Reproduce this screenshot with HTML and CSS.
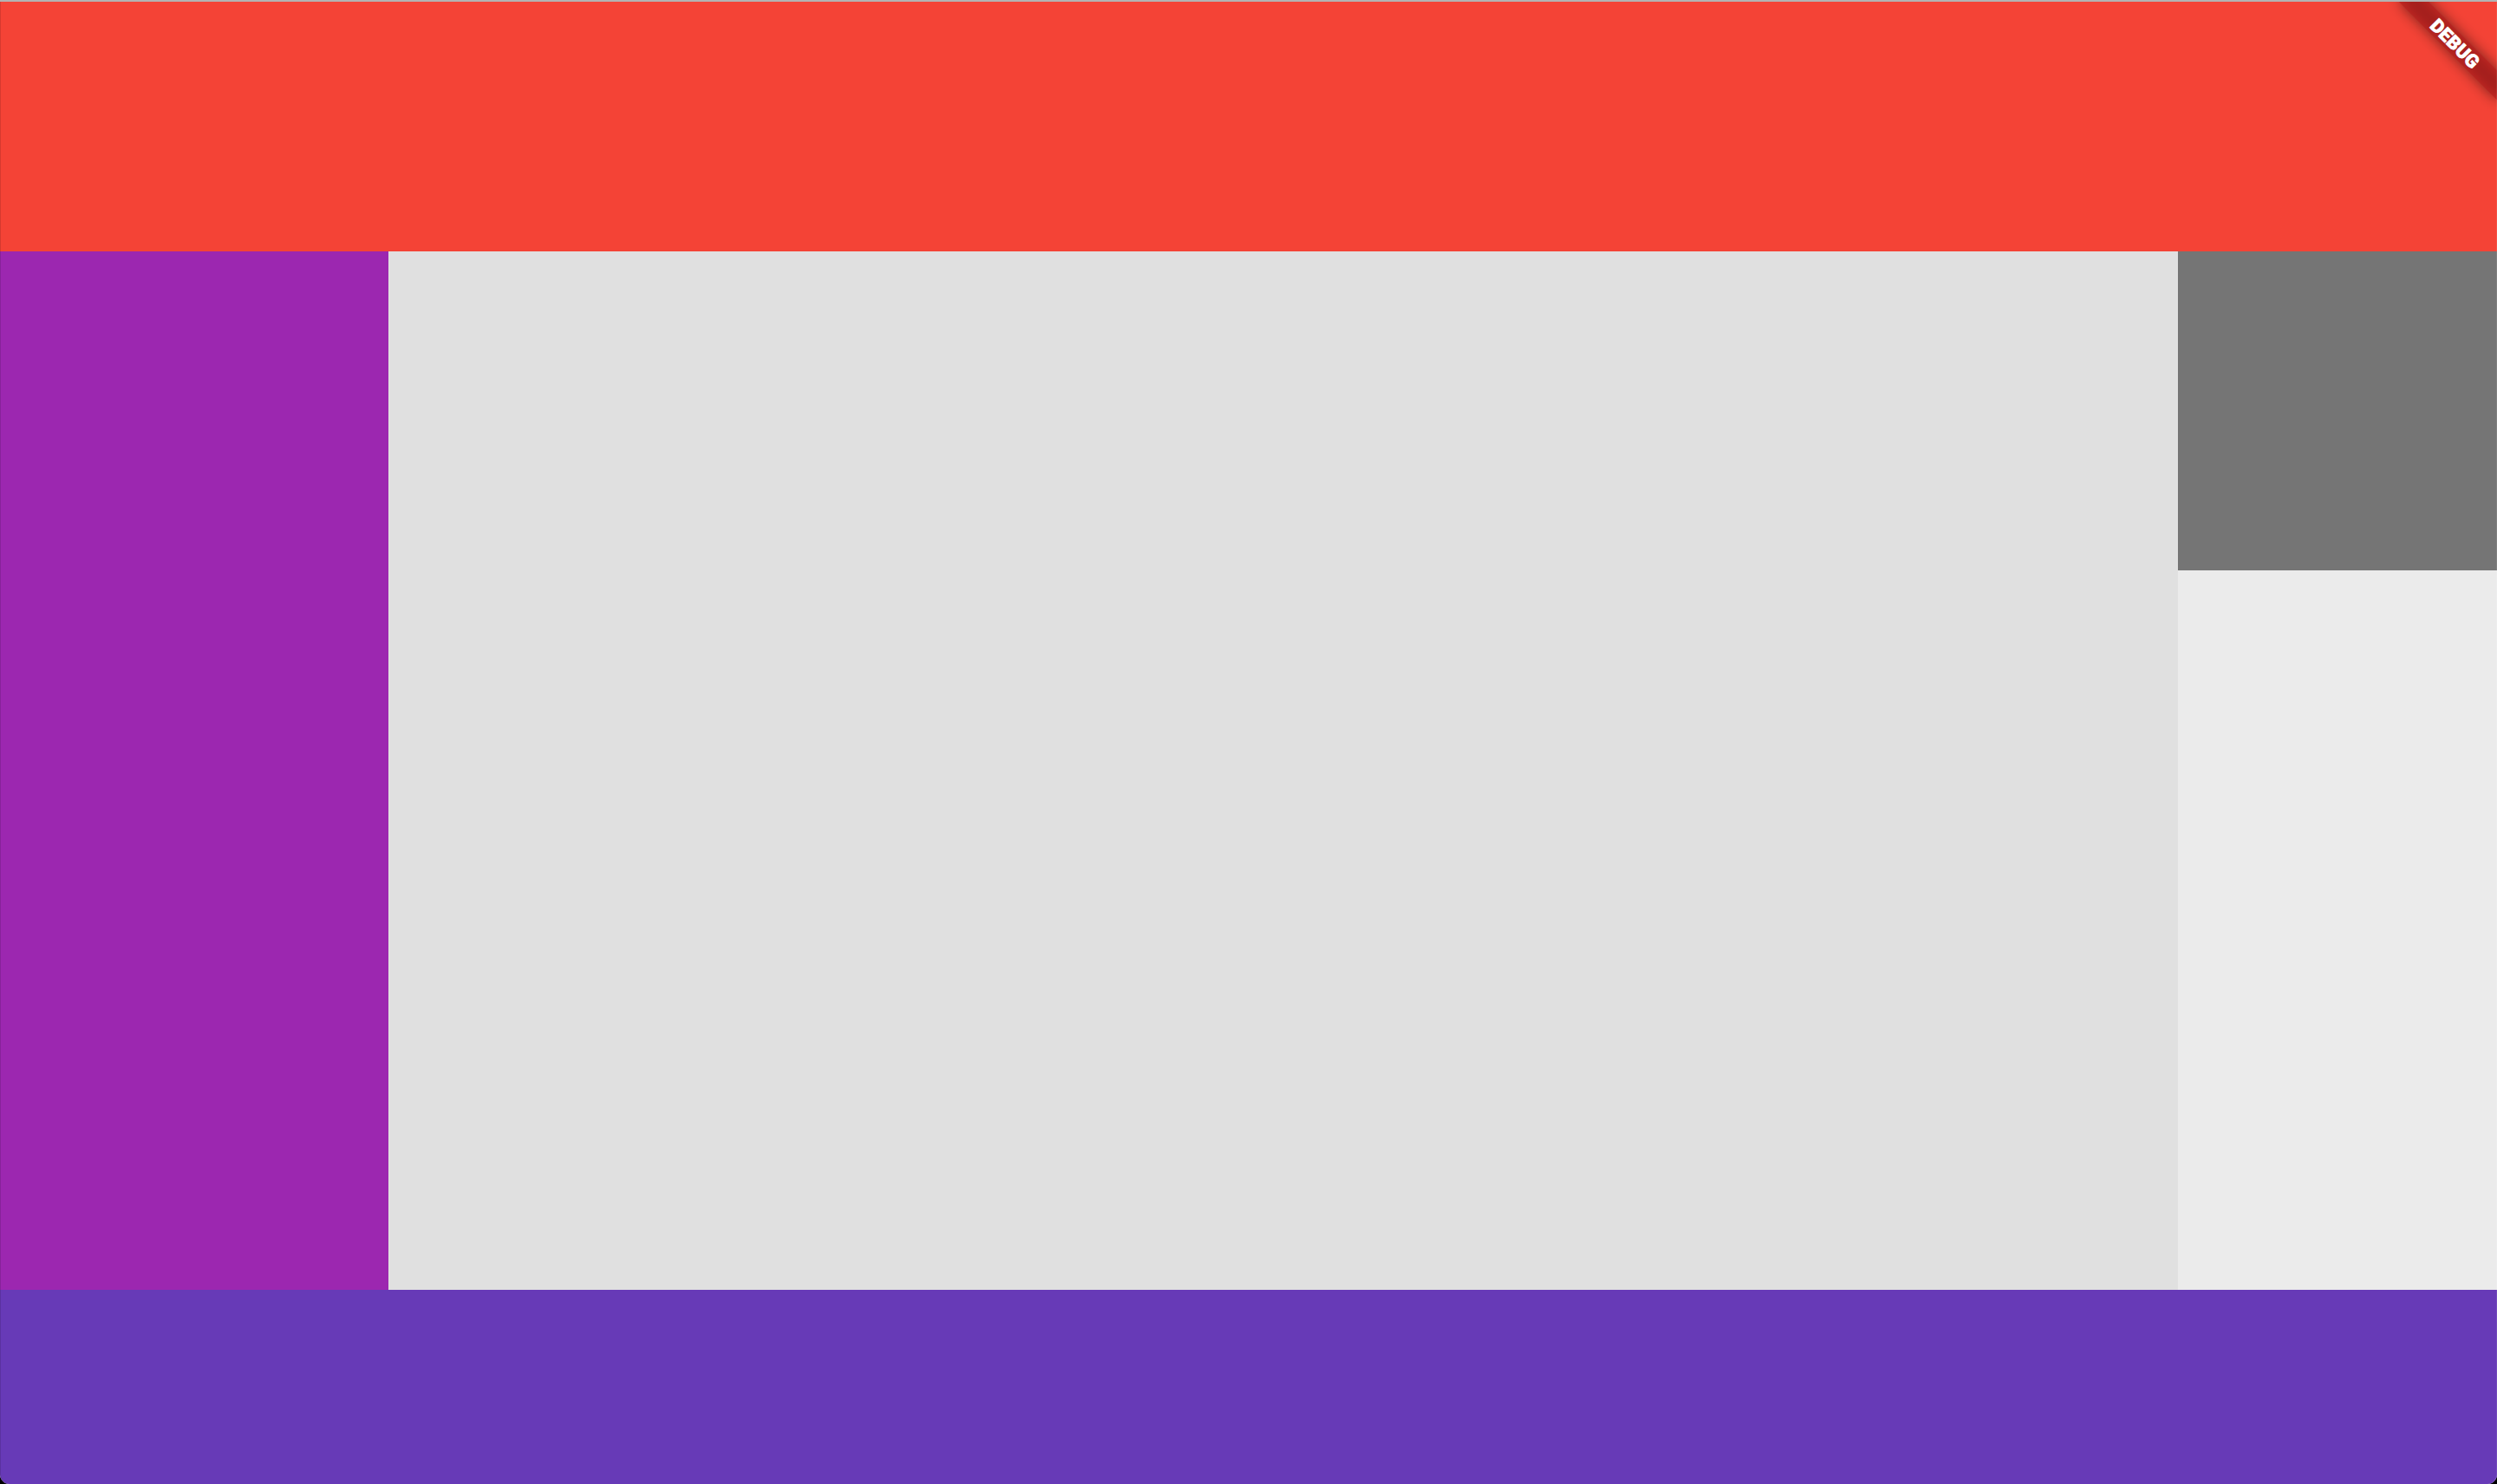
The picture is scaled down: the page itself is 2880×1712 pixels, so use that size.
FILE: index.html
```html
<!DOCTYPE html>
<html lang="en">
<head>
<meta charset="utf-8">
<title>Layout</title>
<link rel="stylesheet" href="styles.css">
</head>
<body>
<div class="window">
  <div class="app">
    <header class="header"></header>
    <aside class="sidebar"></aside>
    <main class="content"></main>
    <section class="right">
      <div class="right-top"></div>
      <div class="right-bottom"></div>
    </section>
    <footer class="footer"></footer>
  </div>
  <div class="banner-anchor">
    <div class="banner"><span class="banner-text">DEBUG</span></div>
  </div>
  <div class="edges"></div>
</div>
</body>
</html>
```
FILE: styles.css
```css
html, body {
  margin: 0;
  padding: 0;
  width: 100%;
  height: 100%;
  background: #000000;
  overflow: hidden;
}

.window {
  position: relative;
  width: 2880px;
  height: 1712px;
  box-sizing: border-box;
  border-top: 2px solid #b3b3b3;
  border-radius: 0 0 11px 11px;
  overflow: hidden;
  background: #e0e0e0;
}

.app {
  display: grid;
  grid-template-columns: 448px 1fr 368px;
  grid-template-rows: 288px 1198px 224px;
  grid-template-areas:
    "header header header"
    "sidebar content right"
    "footer footer footer";
  width: 100%;
  height: 100%;
}

.header {
  grid-area: header;
  background: #f44336;
}

.sidebar {
  grid-area: sidebar;
  background: #9c27b0;
}

.content {
  grid-area: content;
  background: #e0e0e0;
}

.right {
  grid-area: right;
  display: flex;
  flex-direction: column;
  background: #ebebeb;
}

.right-top {
  height: 368px;
  background: #757575;
}

.right-bottom {
  flex: 1;
  background: #ebebeb;
}

.footer {
  grid-area: footer;
  background: #673ab7;
}

/* Debug banner (overlay in the top-right corner) */
.banner-anchor {
  position: absolute;
  top: 0;
  right: 0;
  width: 0;
  height: 0;
  transform-origin: 0 0;
  transform: rotate(45deg);
}

.banner {
  position: absolute;
  left: -80px;
  top: 56px;
  width: 160px;
  height: 24px;
  display: flex;
  justify-content: center;
  align-items: center;
}

.banner::before {
  content: "";
  position: absolute;
  inset: 0;
  background: rgba(0, 0, 0, 0.5);
  filter: blur(8px);
}

.banner::after {
  content: "";
  position: absolute;
  inset: 0;
  background: rgba(183, 28, 28, 0.63);
}

.banner-text {
  position: relative;
  z-index: 1;
  top: 1px;
  font-family: Roboto, "Liberation Sans", sans-serif;
  font-weight: 900;
  font-size: 21.5px;
  line-height: 21.5px;
  letter-spacing: 0.3px;
  color: #ffffff;
  -webkit-text-stroke: 0.7px #ffffff;
}

.edges {
  position: absolute;
  inset: 0;
  pointer-events: none;
  border-left: 1px solid rgba(0, 0, 0, 0.12);
  border-right: 1px solid rgba(255, 255, 255, 0.08);
  border-radius: 0 0 11px 11px;
}
```
